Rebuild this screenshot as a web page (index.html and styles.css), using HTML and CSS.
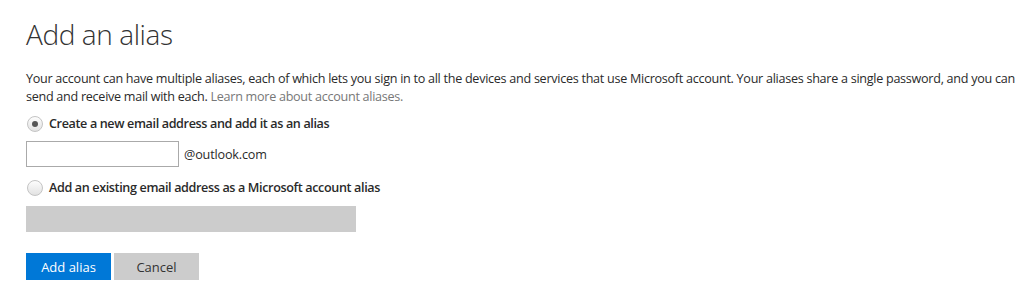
FILE: index.html
```html
<!DOCTYPE html>
<html>
<head>
<meta charset="utf-8">
<link rel="stylesheet" href="styles.css">
</head>
<body>
<div class="page">
  <h1 class="title">Add an alias</h1>
  <p class="intro">Your account can have multiple aliases, each of which lets you sign in to all the devices and services that use Microsoft account. Your aliases share a single password, and you can send and receive mail with each. <a class="learn" href="#">Learn more about account aliases.</a></p>
  <label class="option">
    <span class="radio checked"><span class="dot"></span></span>
    <span class="option-text">Create a new email address and add it as an alias</span>
  </label>
  <div class="email-row">
    <span class="text-input"></span>
    <span class="domain">@outlook.com</span>
  </div>
  <label class="option second">
    <span class="radio"></span>
    <span class="option-text">Add an existing email address as a Microsoft account alias</span>
  </label>
  <div class="disabled-input"></div>
  <div class="actions">
    <button class="btn primary">Add alias</button>
    <button class="btn secondary">Cancel</button>
  </div>
</div>
</body>
</html>
```
FILE: styles.css
```css
html, body {
  margin: 0;
  padding: 0;
  background: #fff;
}
body {
  font-family: "Open Sans", "Noto Sans", sans-serif;
  color: #2a2a2a;
}
.page {
  padding: 0 0 0 26px;
  width: 996px;
}
.title {
  margin: 0;
  padding-top: 14px;
  font-weight: 300;
  font-size: 28px;
  line-height: 40px;
  color: #333;
  letter-spacing: -0.4px;
}
.intro {
  margin: 16px 0 0 0;
  font-size: 12.6px;
  line-height: 18px;
  letter-spacing: -0.28px;
}
.learn {
  color: #777;
  text-decoration: none;
}
.option {
  display: flex;
  align-items: center;
  gap: 6px;
  margin-top: 9px;
  height: 17px;
  font-size: 12.6px;
  font-weight: 600;
  letter-spacing: -0.37px;
}
.option.second {
  margin-top: 12px;
}
.radio {
  box-sizing: border-box;
  width: 16px;
  height: 16px;
  border-radius: 50%;
  border: 1px solid #c4c4c4;
  background: linear-gradient(#fdfdfd, #e2e2e2);
  display: flex;
  align-items: center;
  justify-content: center;
  margin-left: 1px;
}
.dot {
  width: 6px;
  height: 6px;
  border-radius: 50%;
  background: #555;
}
.email-row {
  display: flex;
  align-items: center;
  gap: 5px;
  margin-top: 9px;
}
.text-input {
  box-sizing: border-box;
  width: 153px;
  height: 26px;
  border: 1px solid #aaa;
  background: #fff;
}
.domain {
  font-size: 12.6px;
  letter-spacing: -0.15px;
}
.disabled-input {
  width: 330px;
  height: 26px;
  background: #cccccc;
  margin-top: 10px;
}
.actions {
  display: flex;
  gap: 3px;
  margin-top: 21px;
}
.btn {
  box-sizing: border-box;
  width: 85px;
  height: 27px;
  border: 1px solid transparent;
  font-family: inherit;
  font-size: 13px;
  padding: 0;
  cursor: pointer;
}
.primary {
  background: #0078d7;
  color: #fff;
}
.secondary {
  background: #cccccc;
  color: #333;
}
```
